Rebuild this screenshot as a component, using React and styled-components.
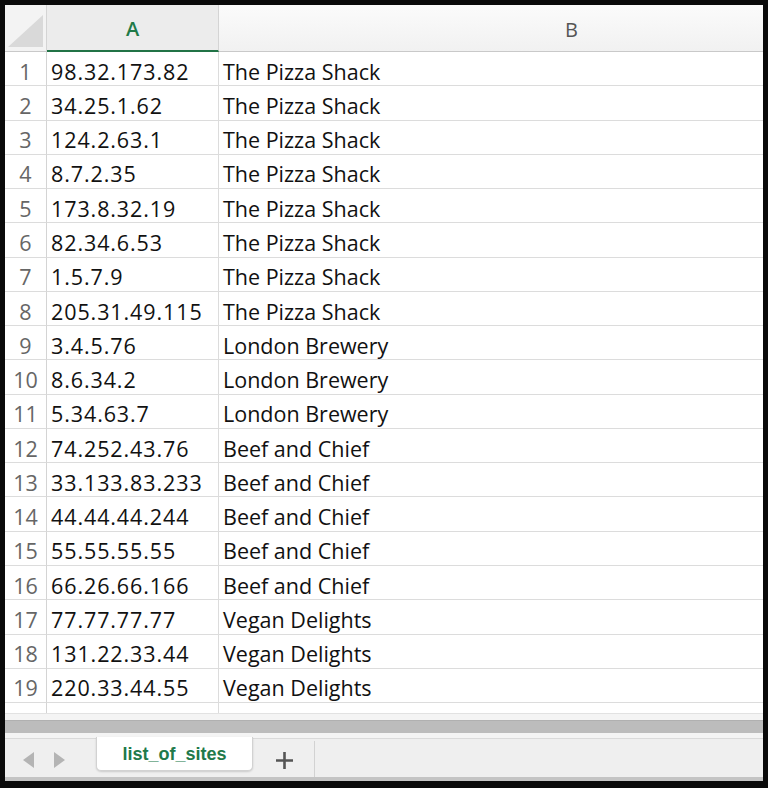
import React from "react";
import styled, { createGlobalStyle } from "styled-components";

const rows = [
  ["98.32.173.82", "The Pizza Shack"],
  ["34.25.1.62", "The Pizza Shack"],
  ["124.2.63.1", "The Pizza Shack"],
  ["8.7.2.35", "The Pizza Shack"],
  ["173.8.32.19", "The Pizza Shack"],
  ["82.34.6.53", "The Pizza Shack"],
  ["1.5.7.9", "The Pizza Shack"],
  ["205.31.49.115", "The Pizza Shack"],
  ["3.4.5.76", "London Brewery"],
  ["8.6.34.2", "London Brewery"],
  ["5.34.63.7", "London Brewery"],
  ["74.252.43.76", "Beef and Chief"],
  ["33.133.83.233", "Beef and Chief"],
  ["44.44.44.244", "Beef and Chief"],
  ["55.55.55.55", "Beef and Chief"],
  ["66.26.66.166", "Beef and Chief"],
  ["77.77.77.77", "Vegan Delights"],
  ["131.22.33.44", "Vegan Delights"],
  ["220.33.44.55", "Vegan Delights"],
  ["11.22.33.44", "Vegan Delights"],
];

const GlobalStyle = createGlobalStyle`
  html, body {
    margin: 0;
    padding: 0;
    background: #000;
  }
  * { box-sizing: border-box; }
`;

const Frame = styled.div`
  width: 768px;
  height: 788px;
  padding: 5px 5px 7px 5px;
  background: #0a0a0a;
`;

const Window = styled.div`
  height: 100%;
  display: flex;
  flex-direction: column;
  background: #fff;
  overflow: hidden;
`;

const Sheet = styled.div`
  height: 708px;
  overflow: hidden;
`;

const Grid = styled.div`
  display: grid;
  grid-template-columns: 42px 172px 706px;
  grid-template-rows: 47px;
  grid-auto-rows: 34.27px;
  font-family: "Open Sans", "Noto Sans", sans-serif;
  font-size: 21.5px;
`;

const Corner = styled.div`
  background: #f3f3f3;
  border-right: 1px solid #d4d4d4;
  border-bottom: 1px solid #c9c9c9;
  display: flex;
  align-items: flex-end;
  justify-content: flex-end;
  padding: 0 3px 4px 0;
`;

const ColHead = styled.div`
  display: flex;
  align-items: center;
  justify-content: center;
  padding-top: 2px;
  font-size: 20px;
  color: ${(p) => (p.$active ? "#1f7a48" : "#555")};
  font-weight: ${(p) => (p.$active ? 600 : 500)};
  background: ${(p) =>
    p.$active ? "#ececec" : "linear-gradient(#fbfbfb, #f1f1f1)"};
  border-right: 1px solid #d4d4d4;
  border-bottom: ${(p) =>
    p.$active ? "2px solid #217346" : "1px solid #c9c9c9"};
`;

const RowHead = styled.div`
  display: flex;
  align-items: center;
  justify-content: center;
  padding-top: 5px;
  color: #666;
  background: #fff;
  border-right: 1px solid #d4d4d4;
  border-bottom: 1px solid #dcdcdc;
`;

const Cell = styled.div`
  display: flex;
  align-items: center;
  padding: 5px 0 0 4px;
  color: #111;
  letter-spacing: ${(p) => (p.$numeric ? "0.9px" : "0")};
  white-space: nowrap;
  overflow: hidden;
  border-right: 1px solid #dcdcdc;
  border-bottom: 1px solid #dcdcdc;
`;

const ScrollArea = styled.div`
  height: 25px;
  background: #f4f4f4;
  border-top: 1px solid #e2e2e2;
  padding: 6px 0 5px;
`;

const ScrollBar = styled.div`
  height: 13px;
  background: #bcbcbc;
  border-top: 1px solid #b0b0b0;
`;

const TabBar = styled.div`
  height: 43px;
  display: flex;
  align-items: flex-start;
  background: #efefef;
  border-top: 1px solid #dadada;
  border-bottom: 4px solid #c4c4c4;
`;

const Arrows = styled.div`
  width: 91px;
  height: 100%;
  display: flex;
  align-items: center;
  gap: 20px;
  padding: 4px 0 0 18px;
`;

const Tab = styled.div`
  width: 157px;
  height: 34px;
  margin-top: -2px;
  display: flex;
  align-items: center;
  justify-content: center;
  background: #fff;
  border: 1px solid #d2d2d2;
  border-top: none;
  border-radius: 0 0 5px 5px;
  box-shadow: 0 1px 2px rgba(0, 0, 0, 0.15);
  color: #21794a;
  font-family: "Liberation Sans", Arial, sans-serif;
  font-weight: 700;
  font-size: 18px;
  padding-top: 2px;
`;

const AddButton = styled.div`
  width: 62px;
  height: 36px;
  display: flex;
  align-items: center;
  justify-content: center;
  border-right: 1px solid #d2d2d2;
  margin-top: 2px;
  padding: 2px 0 0 2px;
`;

function Triangle({ dir }) {
  const d = dir === "left" ? "M11 0 L11 16 L0 8 Z" : "M0 0 L0 16 L11 8 Z";
  return (
    <svg width="11" height="16" viewBox="0 0 11 16">
      <path d={d} fill="#b4b4b4" />
    </svg>
  );
}

export default function App() {
  return (
    <>
      <GlobalStyle />
      <Frame>
        <Window>
          <Sheet>
            <Grid>
              <Corner>
                <svg width="35" height="32" viewBox="0 0 35 32">
                  <path d="M0 32 L35 32 L35 0 Z" fill="#d9d9d9" />
                </svg>
              </Corner>
              <ColHead $active>A</ColHead>
              <ColHead>B</ColHead>
              {rows.map(([ip, site], i) => (
                <React.Fragment key={i}>
                  <RowHead>{i + 1}</RowHead>
                  <Cell $numeric>{ip}</Cell>
                  <Cell>{site}</Cell>
                </React.Fragment>
              ))}
            </Grid>
          </Sheet>
          <ScrollArea>
            <ScrollBar />
          </ScrollArea>
          <TabBar>
            <Arrows>
              <Triangle dir="left" />
              <Triangle dir="right" />
            </Arrows>
            <Tab>list_of_sites</Tab>
            <AddButton>
              <svg width="17" height="17" viewBox="0 0 17 17">
                <path
                  d="M8.5 0 V17 M0 8.5 H17"
                  stroke="#555"
                  strokeWidth="2.6"
                />
              </svg>
            </AddButton>
          </TabBar>
        </Window>
      </Frame>
    </>
  );
}
